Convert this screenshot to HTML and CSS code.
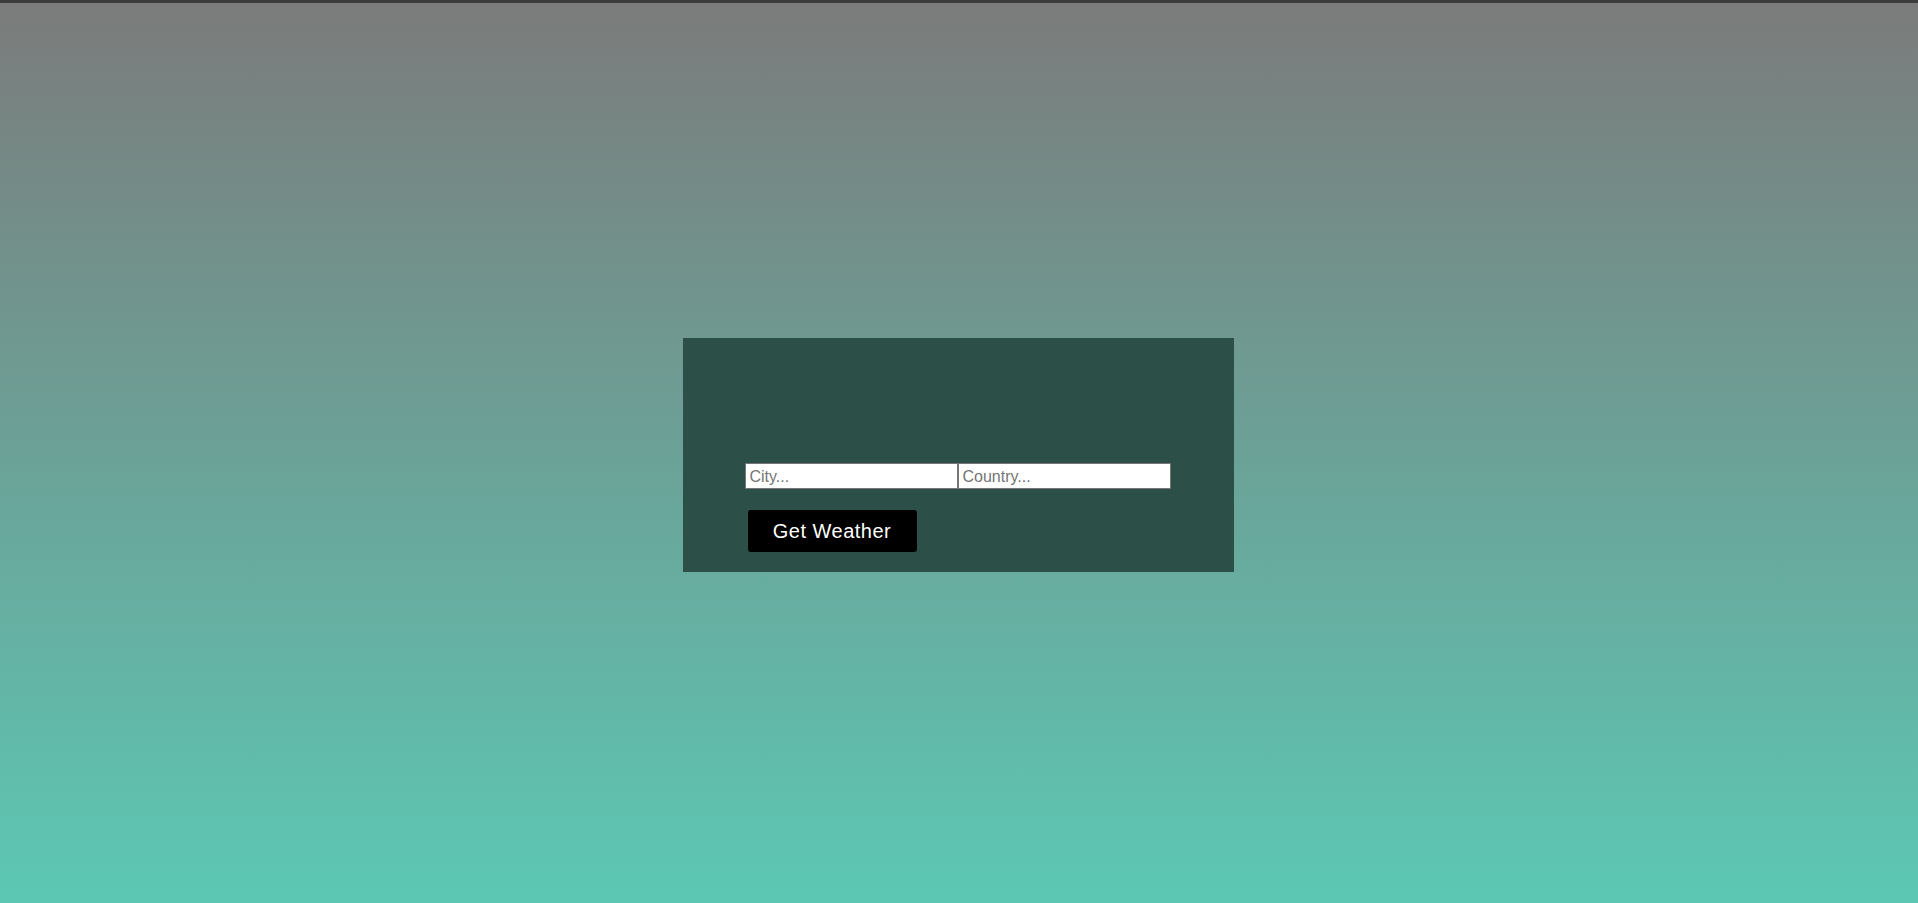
FILE: index.html
```html
<!DOCTYPE html>
<html lang="en">
<head>
<meta charset="utf-8">
<title>Weather</title>
<link rel="stylesheet" href="styles.css">
</head>
<body>
<div class="topbar"></div>
<main class="stage">
  <section class="card">
    <form class="form" onsubmit="return false;">
      <div class="fields">
        <input class="field" type="text" name="city" placeholder="City...">
        <input class="field" type="text" name="country" placeholder="Country...">
      </div>
      <button class="btn" type="submit">Get Weather</button>
    </form>
  </section>
</main>
</body>
</html>
```

FILE: styles.css
```css
html, body {
  margin: 0;
  padding: 0;
  height: 100%;
}

body {
  display: flex;
  flex-direction: column;
  font-family: "Liberation Sans", Arial, sans-serif;
  background: linear-gradient(to bottom, #7b7b7b 0%, #5cc8b4 100%);
  overflow: hidden;
}

.topbar {
  height: 3px;
  background: #3c3c3c;
  flex: none;
}

.stage {
  flex: 1;
  display: flex;
  align-items: center;
  justify-content: center;
  padding-top: 4px;
}

.card {
  width: 551px;
  height: 234px;
  box-sizing: border-box;
  margin-right: 2px;
  background: #2c5048;
  padding: 125px 62px 0 62px;
}

.form {
  display: flex;
  flex-direction: column;
  align-items: flex-start;
}

.fields {
  display: flex;
}

.field {
  width: 213px;
  height: 26px;
  box-sizing: border-box;
  margin: 0;
  padding: 3px 4px 1px 4px;
  border: 1px solid #767676;
  border-radius: 0;
  background: #fff;
  font-family: "Liberation Sans", Arial, sans-serif;
  font-size: 16px;
  color: #222;
  outline: none;
}

.field::placeholder {
  color: #757575;
}

.btn {
  margin: 21px 0 0 3px;
  width: 169px;
  height: 42px;
  padding: 0;
  border: none;
  border-radius: 3px;
  background: #000;
  color: #fff;
  font-family: "Liberation Sans", Arial, sans-serif;
  font-size: 20px;
  letter-spacing: 0.5px;
  cursor: pointer;
}
```
